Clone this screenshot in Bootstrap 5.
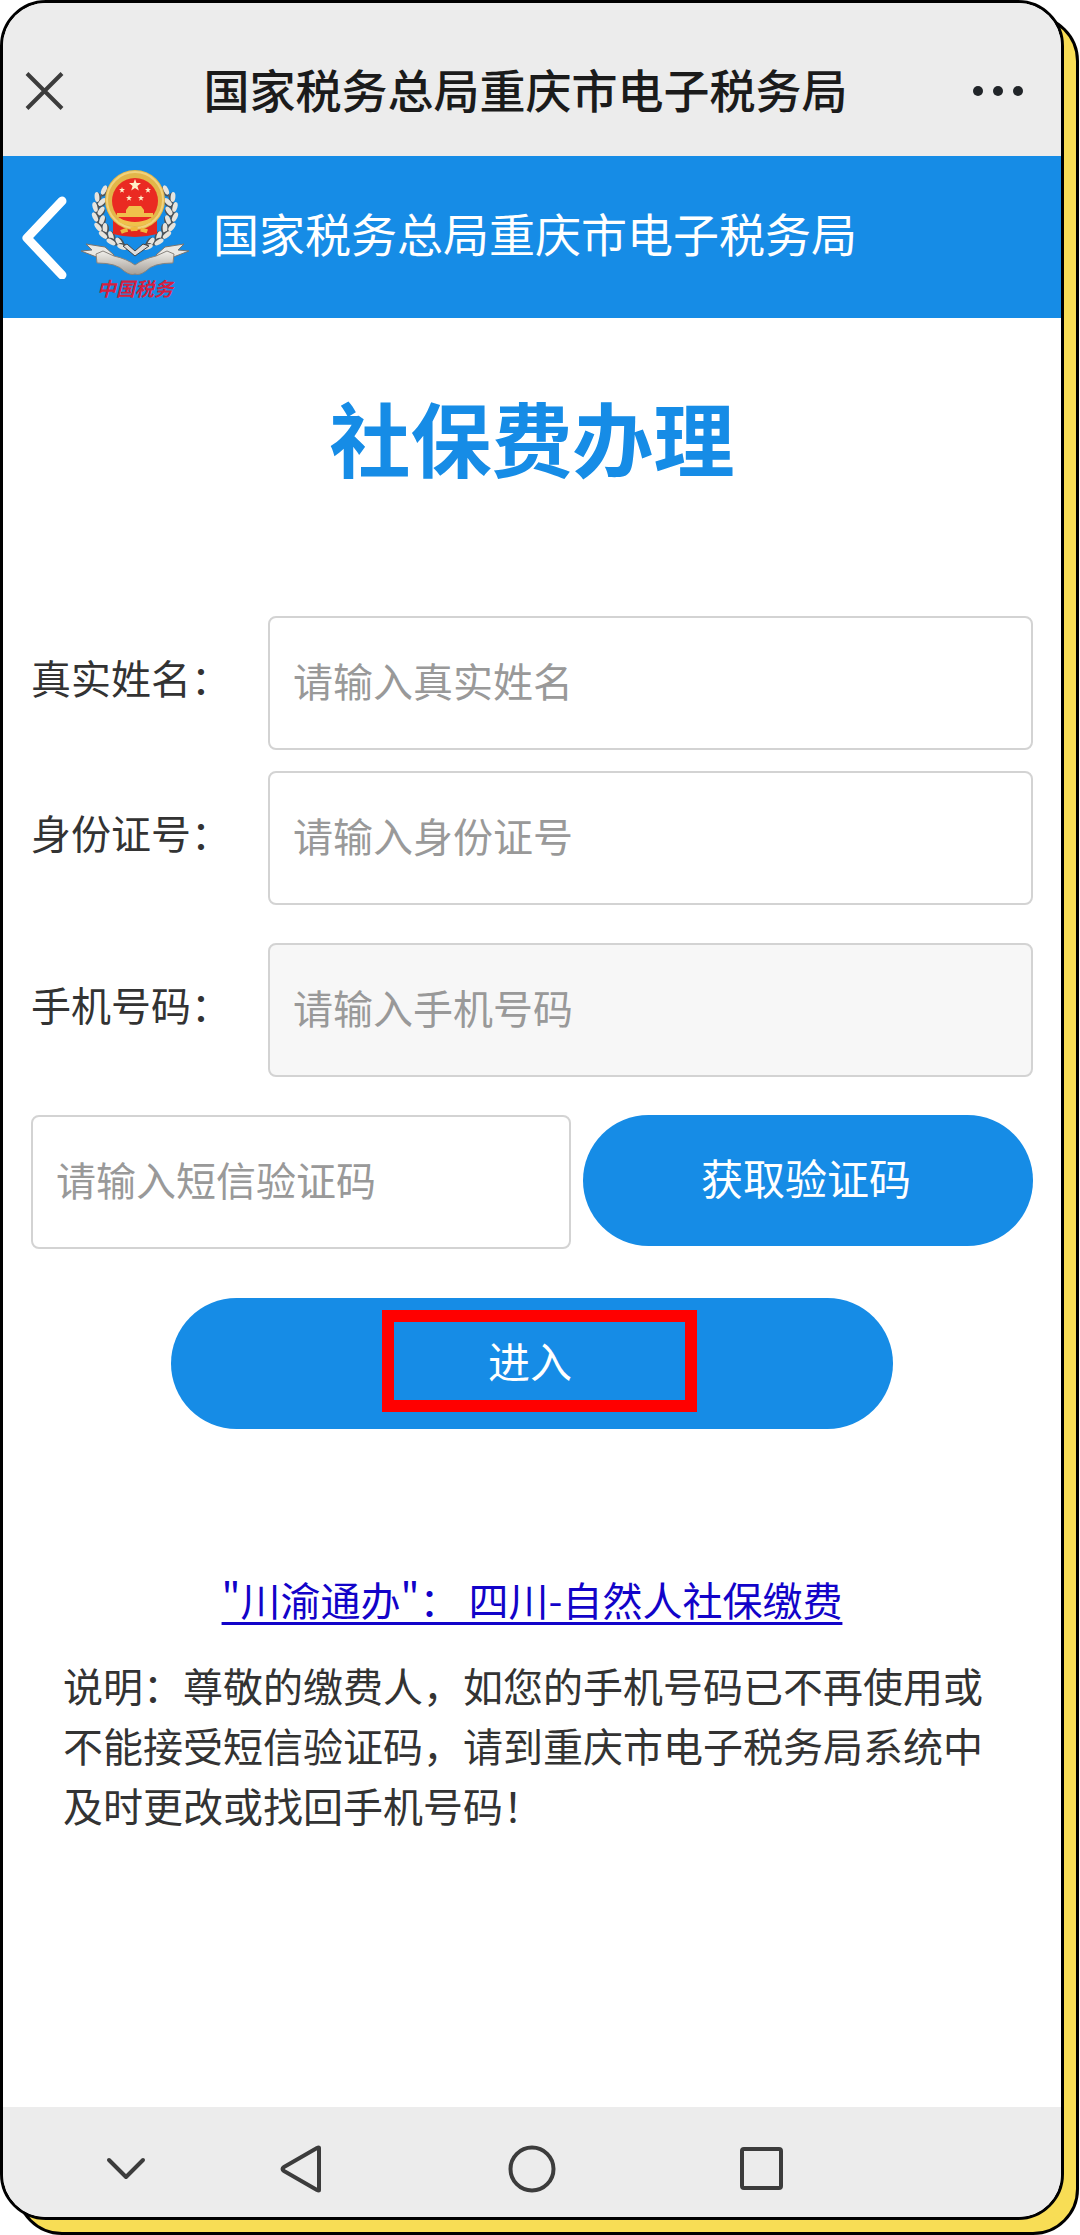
<!DOCTYPE html>
<html lang="zh-CN">
<head>
<meta charset="utf-8">
<meta name="viewport" content="width=device-width, initial-scale=1">
<title>社保费办理</title>
<link href="https://cdn.jsdelivr.net/npm/bootstrap@5.3.0/dist/css/bootstrap.min.css" rel="stylesheet">
<style>
  :root { --brand: #168ce6; --chrome: #ececec; --ink: #333; }
  body { font-family: "Noto Sans CJK SC", sans-serif; font-size: 40px; line-height: 60px; color: var(--ink); background: #fff; }
  .stage { min-height: 100vh; padding: 0 16px 15px 0; isolation: isolate; }
  .backdrop { inset: 15px 1px 0 16px; z-index: -1; border: 3px solid #000; border-radius: 46px; background: #f8dd55; }
  .phone { border: 3px solid #000; border-radius: 46px; background: #fff; }
  .icon-btn { border: 0; background: none; padding: 0; line-height: 0; color: #3c3c3c; }
  .topbar { background: var(--chrome); height: 153px; padding: 22px 38px 0 21px; color: #1b1b1b; }
  .topbar-title { font-size: 46px; font-weight: 500; padding: 0 0 6px 14px; }
  .brandbar { background: var(--brand); height: 162px; padding: 0 16px; color: #fff; }
  .brandbar-title { font-size: 46px; line-height: 60px; padding-bottom: 10px; margin-left: 22px; }
  .page-title { font-size: 81px; line-height: 100px; font-weight: 700; color: var(--brand); margin: 68px 0 130px; }
  .form-area { padding: 0 28px; }
  .field-label { width: 237px; padding-bottom: 12px; }
  .field { height: 134px; font-size: 40px; line-height: 60px; border: 2px solid #d3d3d3; border-radius: 8px; padding: 0 23px 6px; color: var(--ink); }
  .field::placeholder { color: #999; opacity: 1; }
  .field:disabled { background: #f7f7f7; }
  .gap-s { margin-bottom: 21px; }
  .gap-m { margin-bottom: 38px; }
  .gap-l { margin-bottom: 49px; }
  .pill { background: var(--brand); color: #fff; height: 131px; font-size: 42px; line-height: 60px; padding: 0 4px 8px 0; border: 0; }
  .pill:hover { background: #0f7dd2; color: #fff; }
  .code-col { flex: 540 1 0; }
  .send-col { flex: 450 1 0; }
  .enter-wrap { width: 722px; max-width: 100%; }
  .highlight { width: 315px; height: 102px; border: 12px solid #f00; top: 12px; left: 211px; pointer-events: none; }
  .region-link { color: #1203c9; text-decoration-thickness: 3px; text-underline-offset: 6px; text-decoration-skip-ink: none; }
  .note { padding: 0 60px; margin: 26px 0 0; }
  .link-row { margin-top: 140px; }
  .navkeys { display: grid; grid-template-columns: 7fr 3fr 10fr 3fr 7fr; background: var(--chrome); height: 110px; padding-top: 13px; }
</style>
<script src="https://cdn.jsdelivr.net/npm/bootstrap@5.3.0/dist/js/bootstrap.bundle.min.js"></script>
</head>
<body>
<div class="stage position-relative d-flex flex-column">
  <div class="backdrop position-absolute"></div>
  <div class="phone flex-grow-1 d-flex flex-column overflow-hidden">

    <header class="topbar d-flex align-items-center justify-content-between">
      <button class="icon-btn" type="button" aria-label="关闭">
        <svg width="40" height="40" viewBox="0 0 40 40" fill="none" stroke="currentColor" stroke-width="4"><path d="M3 2.500 38 37.500M38 2.500 3 37.500"/></svg>
      </button>
      <div class="topbar-title">国家税务总局重庆市电子税务局</div>
      <button class="icon-btn text-dark" type="button" aria-label="更多">
        <svg width="50" height="12" viewBox="0 0 50 12" fill="currentColor"><circle cx="5" cy="6" r="5"/><circle cx="25" cy="6" r="5"/><circle cx="45" cy="6" r="5"/></svg>
      </button>
    </header>

    <div class="brandbar d-flex align-items-center">
      <button class="icon-btn text-white" type="button" aria-label="返回">
        <svg width="48" height="84" viewBox="0 0 48 84" fill="none" stroke="currentColor" stroke-width="9" stroke-linecap="round" stroke-linejoin="round"><path d="M43 6 8 43 43 80"/></svg>
      </button>
      <!-- China Taxation emblem: national emblem, wheat ears, ribbon -->
      <svg class="ms-2" width="116" height="142" viewBox="6 6 116 142" role="img" aria-label="中国税务">
        <defs>
          <g id="grain"><ellipse rx="3" ry="5.500" fill="#4d5358" cx="1" cy="1"/><ellipse rx="2.400" ry="5" fill="#e6e4de"/></g>
          <g id="ear">
            <path d="M34 32Q22 55 33 72Q43 86 62 90" fill="none" stroke="#6b6a66" stroke-width="2"/>
            <use href="#grain" transform="translate(35 30) rotate(25)"/>
            <use href="#grain" transform="translate(28 37) rotate(-5)"/>
            <use href="#grain" transform="translate(33 42) rotate(45)"/>
            <use href="#grain" transform="translate(26 47) rotate(-15)"/>
            <use href="#grain" transform="translate(32 51) rotate(35)"/>
            <use href="#grain" transform="translate(26 57) rotate(-25)"/>
            <use href="#grain" transform="translate(33 60) rotate(20)"/>
            <use href="#grain" transform="translate(29 67) rotate(-38)"/>
            <use href="#grain" transform="translate(36 68) rotate(0)"/>
            <use href="#grain" transform="translate(34 75) rotate(-50)"/>
            <use href="#grain" transform="translate(42 76) rotate(-18)"/>
            <use href="#grain" transform="translate(42 82) rotate(-60)"/>
            <use href="#grain" transform="translate(50 82) rotate(-35)"/>
            <use href="#grain" transform="translate(53 87) rotate(-70)"/>
          </g>
          <linearGradient id="silk" x1="0" x2="0" y1="0" y2="1"><stop stop-color="#f0efeb"/><stop offset="1" stop-color="#a59e96"/></linearGradient>
          <path id="star" d="M0-6 1.500-2H6L2.400 1 3.800 5.500 0 3-3.800 5.500-2.400 1-6-2H-1.500Z" fill="#fff0c8"/>
        </defs>
        <use href="#ear"/>
        <use href="#ear" transform="translate(132 0) scale(-1 1)"/>
        <path d="M44 58H88V74Q66 80 44 74Z" fill="#e3261f"/>
        <circle cx="66" cy="40" r="30" fill="#e2b64a"/>
        <circle cx="66" cy="40" r="28" fill="none" stroke="#f1d27c" stroke-width="2"/>
        <circle cx="66" cy="41" r="23" fill="#ea2a22"/>
        <use href="#star" transform="translate(66 25)"/>
        <use href="#star" transform="translate(53 30) scale(.5)"/>
        <use href="#star" transform="translate(79 30) scale(.5)"/>
        <use href="#star" transform="translate(60 38) scale(.5)"/>
        <use href="#star" transform="translate(72 38) scale(.5)"/>
        <path d="M57 50 60 46H72L75 50V53H84V57H48V53H57Z" fill="#f0c14b"/>
        <path d="M50 60Q66 68 82 60" fill="none" stroke="#f0c14b" stroke-width="4"/>
        <path d="M52 72Q66 66 80 72" fill="none" stroke="#efb83e" stroke-width="4" stroke-dasharray="7 3"/>
        <path d="M54 86 66 96 80 86 74 84 66 91 58 84Z" fill="#ddd" stroke="#444" stroke-width="1"/>
        <path d="M12 91 23 90 17 84 36 87 45 95 37 101 25 96Z" fill="#e9e8e4" stroke="#77736f" stroke-width="1"/>
        <path d="M120 91 109 90 115 84 96 87 87 95 95 101 107 96Z" fill="#e9e8e4" stroke="#77736f" stroke-width="1"/>
        <path d="M27 94 34 91 45 96Q58 99 66 105Q74 99 87 96L98 91 105 94 104 103Q84 103 77 111Q70 116 66 114Q62 116 55 111Q48 103 28 103Z" fill="url(#silk)" stroke="#88837d" stroke-width="1"/>
        <text x="66" y="136" text-anchor="middle" font-family="Noto Sans CJK SC, sans-serif" font-size="19" font-weight="700" font-style="italic" fill="#d51f3f">中国税务</text>
      </svg>
      <div class="brandbar-title">国家税务总局重庆市电子税务局</div>
    </div>

    <main class="flex-grow-1">
      <h1 class="page-title text-center">社保费办理</h1>
      <form class="form-area">
        <div class="d-flex align-items-center gap-s">
          <label class="field-label flex-shrink-0" for="realName">真实姓名：</label>
          <input class="form-control field" id="realName" type="text" placeholder="请输入真实姓名">
        </div>
        <div class="d-flex align-items-center gap-m">
          <label class="field-label flex-shrink-0" for="idNumber">身份证号：</label>
          <input class="form-control field" id="idNumber" type="text" placeholder="请输入身份证号">
        </div>
        <div class="d-flex align-items-center gap-m">
          <label class="field-label flex-shrink-0" for="phone">手机号码：</label>
          <input class="form-control field" id="phone" type="tel" placeholder="请输入手机号码" disabled>
        </div>
        <div class="d-flex align-items-start gap-l">
          <div class="code-col me-2"><input class="form-control field" id="smsCode" type="text" aria-label="短信验证码" placeholder="请输入短信验证码"></div>
          <div class="send-col ms-1"><button class="btn pill rounded-pill w-100" type="button">获取验证码</button></div>
        </div>
        <div class="enter-wrap position-relative mx-auto">
          <button class="btn pill rounded-pill w-100" type="submit">进入</button>
          <div class="highlight position-absolute"></div>
        </div>
      </form>
      <div class="link-row text-center"><a class="region-link" href="#">"川渝通办"： 四川-自然人社保缴费</a></div>
      <p class="note">说明：尊敬的缴费人，如您的手机号码已不再使用或不能接受短信验证码，请到重庆市电子税务局系统中及时更改或找回手机号码！</p>
    </main>

    <nav class="navkeys align-items-center" aria-label="系统导航">
      <button class="icon-btn" type="button" aria-label="收起"><svg width="48" height="48" viewBox="0 0 48 48" fill="none" stroke="currentColor" stroke-width="4" stroke-linecap="round" stroke-linejoin="round"><path d="M7 15 24 32 41 15"/></svg></button>
      <button class="icon-btn" type="button" aria-label="后退"><svg width="48" height="48" viewBox="0 0 48 48" fill="none" stroke="currentColor" stroke-width="4" stroke-linejoin="round"><path d="M40 3V45Q40 46 38 45L5 26Q2 24 5 22L38 3Q40 2 40 3Z"/></svg></button>
      <button class="icon-btn" type="button" aria-label="主页"><svg width="48" height="48" viewBox="0 0 48 48" fill="none" stroke="currentColor" stroke-width="4"><circle cx="24" cy="24" r="21.500"/></svg></button>
      <button class="icon-btn" type="button" aria-label="最近任务"><svg width="48" height="48" viewBox="0 0 48 48" fill="none" stroke="currentColor" stroke-width="4"><rect x="5" y="4" width="39" height="39" rx="2"/></svg></button>
    </nav>
  </div>
</div>
</body>
</html>
